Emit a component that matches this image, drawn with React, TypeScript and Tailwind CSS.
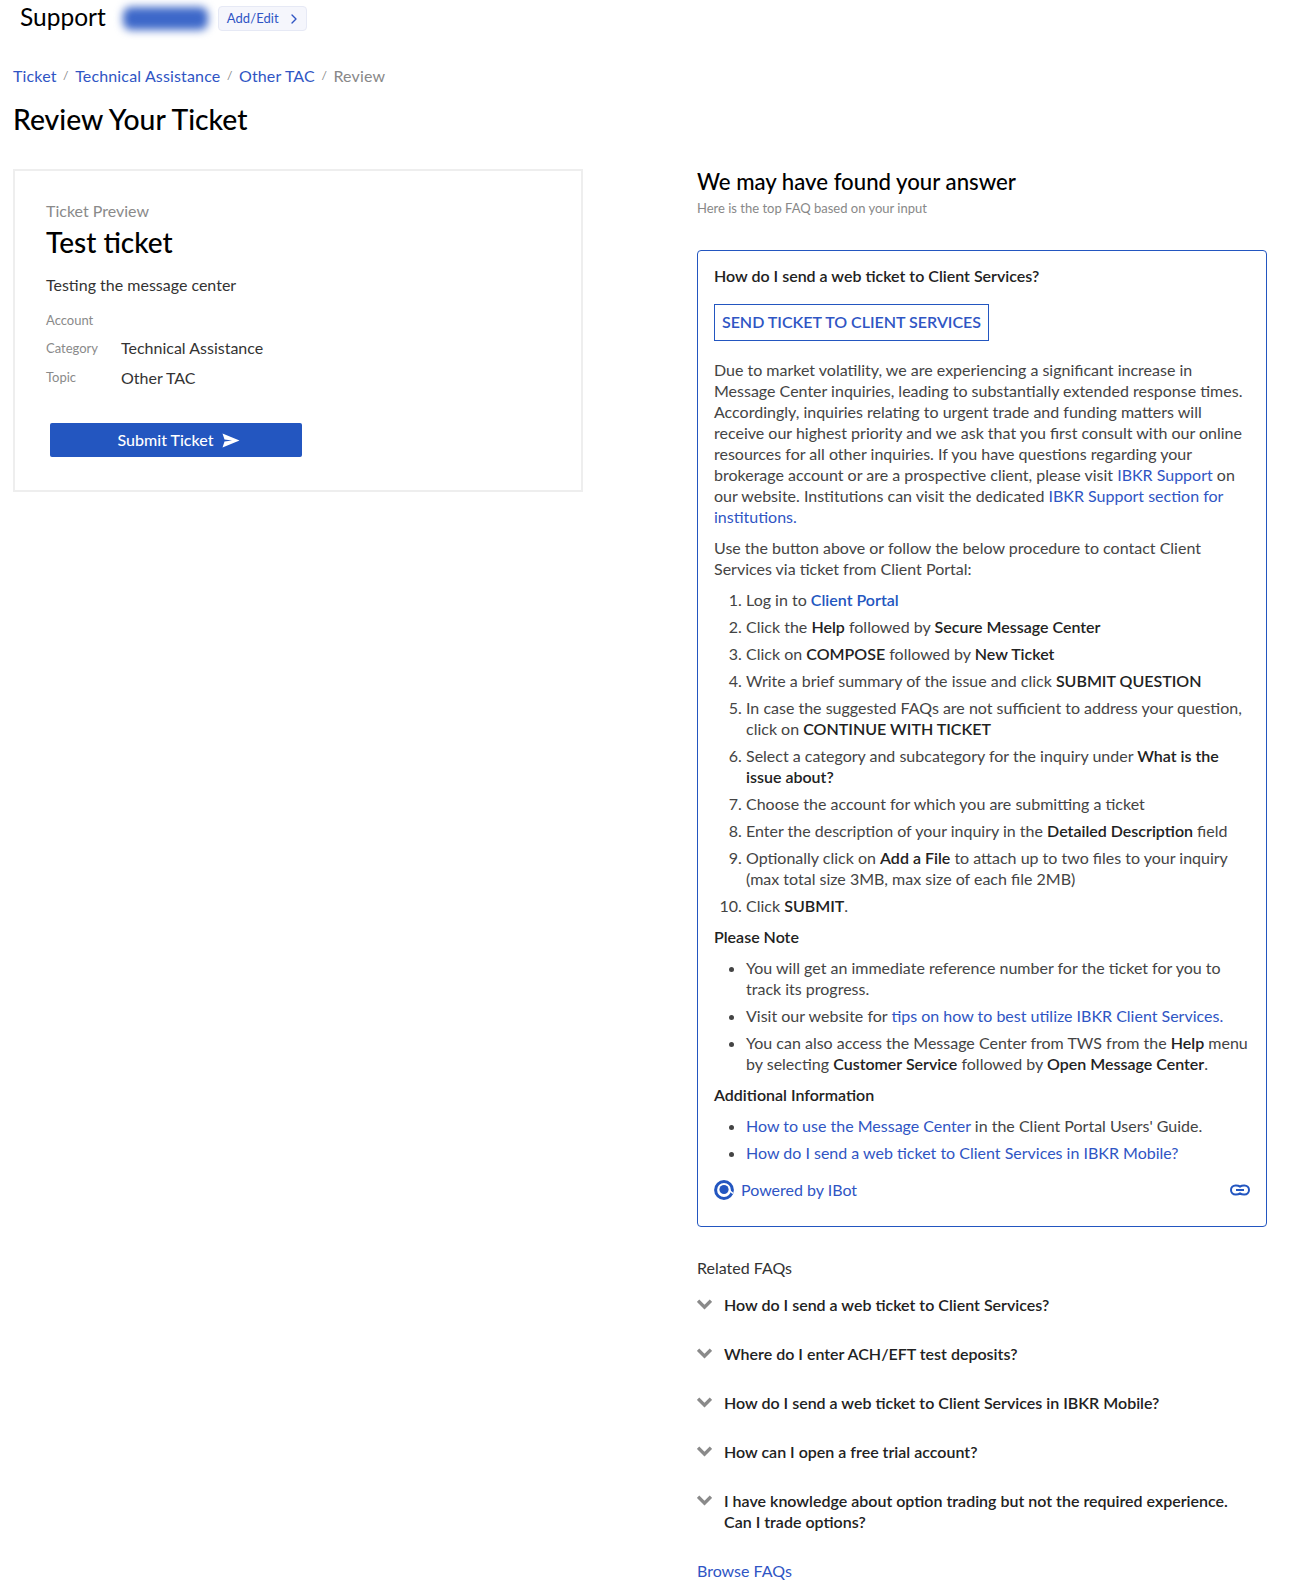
import { ChevronRight } from 'lucide-react'

const LINK = 'text-[#2f55c4]'
const STRONG = 'font-semibold text-[#222]'

const steps: React.ReactNode[] = [
  <>Log in to <a className="text-[#2356c0] font-semibold">Client Portal</a></>,
  <>Click the <b className={STRONG}>Help</b> followed by <b className={STRONG}>Secure Message Center</b></>,
  <>Click on <b className={STRONG}>COMPOSE</b> followed by <b className={STRONG}>New Ticket</b></>,
  <>Write a brief summary of the issue and click <b className={STRONG}>SUBMIT QUESTION</b></>,
  <>In case the suggested FAQs are not sufficient to address your question, click on <b className={STRONG}>CONTINUE WITH TICKET</b></>,
  <>Select a category and subcategory for the inquiry under <b className={STRONG}>What is the issue about?</b></>,
  <>Choose the account for which you are submitting a ticket</>,
  <>Enter the description of your inquiry in the <b className={STRONG}>Detailed Description</b> field</>,
  <>Optionally click on <b className={STRONG}>Add a File</b> to attach up to two files to your inquiry (max total size 3MB, max size of each file 2MB)</>,
  <>Click <b className={STRONG}>SUBMIT</b>.</>,
]

const related = [
  'How do I send a web ticket to Client Services?',
  'Where do I enter ACH/EFT test deposits?',
  'How do I send a web ticket to Client Services in IBKR Mobile?',
  'How can I open a free trial account?',
  'I have knowledge about option trading but not the required experience. Can I trade options?',
]

function Chevron() {
  return (
    <svg viewBox="0 0 14 10" className="w-[15px] h-[11px] mt-[5px] shrink-0" fill="none" stroke="#8a8a8a" strokeWidth="3.2">
      <path d="M1 1.5 L7 7.5 L13 1.5" />
    </svg>
  )
}

function TicketCard() {
  return (
    <div className="border-2 border-[#eeeeee] px-[31px] pt-[29px] h-[323px]">
      <div className="text-[16px] leading-[21px] text-[#8a8a8a]">Ticket Preview</div>
      <div className="text-[28px] leading-[36px] font-medium text-black mt-[3px]">Test ticket</div>
      <div className="text-[16px] leading-[21px] text-[#333] mt-[14px]">Testing the message center</div>
      <div className="text-[13px] leading-[20px] text-[#8a8a8a] mt-[15px]">Account</div>
      <div className="flex items-center mt-[8px] h-[20px]">
        <span className="w-[75px] text-[13px] text-[#8a8a8a] mt-[1px]">Category</span>
        <span className="text-[16px] text-[#333]">Technical Assistance</span>
      </div>
      <div className="flex items-center mt-[10px] h-[20px]">
        <span className="w-[75px] text-[13px] text-[#8a8a8a]">Topic</span>
        <span className="text-[16px] text-[#333]">Other TAC</span>
      </div>
      <button className="ml-[4px] mt-[35px] pl-[6px] w-[252px] h-[34px] bg-[#2356c0] rounded-[2px] text-white text-[16px] font-medium flex items-center justify-center gap-[9px]">
        Submit Ticket
        <svg viewBox="0 0 18 15" className="w-[18px] h-[15px]" fill="white">
          <path d="M0.5 0.5 L17.5 7.5 L0.5 14.5 L2.5 8.6 L10 7.5 L2.5 6.4 Z" />
        </svg>
      </button>
    </div>
  )
}

function AnswerBox() {
  return (
    <div className="mt-[32px] border border-[#2356c0] rounded-[4px] px-[16px] pt-[14px] h-[977px] text-[16px] leading-[21px] text-[#444]">
      <div className={STRONG}>How do I send a web ticket to Client Services?</div>
      <button className={`mt-[18px] pb-[2px] h-[37px] w-[275px] border border-[#2356c0] text-[16px] font-semibold ${LINK}`}>
        SEND TICKET TO CLIENT SERVICES
      </button>
      <p className="mt-[18px]">
        Due to market volatility, we are experiencing a significant increase in Message Center inquiries, leading to substantially extended response times. Accordingly, inquiries relating to urgent trade and funding matters will receive our highest priority and we ask that you first consult with our online resources for all other inquiries. If you have questions regarding your brokerage account or are a prospective client, please visit <a className={LINK}>IBKR Support</a> on our website. Institutions can visit the dedicated <a className={LINK}>IBKR Support section for institutions.</a>
      </p>
      <p className="mt-[10px]">
        Use the button above or follow the below procedure to contact Client Services via ticket from Client Portal:
      </p>
      <ol className="mt-[10px] pl-[32px] list-decimal flex flex-col gap-[6px]">
        {steps.map((s, i) => <li key={i}>{s}</li>)}
      </ol>
      <div className={`mt-[10px] ${STRONG}`}>Please Note</div>
      <ul className="mt-[10px] pl-[32px] list-disc flex flex-col gap-[6px]">
        <li>You will get an immediate reference number for the ticket for you to track its progress.</li>
        <li>Visit our website for <a className={LINK}>tips on how to best utilize IBKR Client Services.</a></li>
        <li>You can also access the Message Center from TWS from the <b className={STRONG}>Help</b> menu by selecting <b className={STRONG}>Customer Service</b> followed by <b className={STRONG}>Open Message Center</b>.</li>
      </ul>
      <div className={`mt-[10px] ${STRONG}`}>Additional Information</div>
      <ul className="mt-[10px] pl-[32px] list-disc flex flex-col gap-[6px]">
        <li><a className={LINK}>How to use the Message Center</a> in the Client Portal Users' Guide.</li>
        <li><a className={LINK}>How do I send a web ticket to Client Services in IBKR Mobile?</a></li>
      </ul>
      <div className="mt-[16px] flex items-center justify-between">
        <div className={`flex items-center gap-[7px] ${LINK}`}>
          <svg viewBox="0 0 20 20" className="w-[20px] h-[20px]">
            <circle cx="10" cy="10" r="8.4" fill="none" stroke="#2356c0" strokeWidth="3" />
            <circle cx="10" cy="9.5" r="4.6" fill="#2356c0" />
            <path d="M15.5 10.5 L19 13.5" stroke="white" strokeWidth="1.6" />
          </svg>
          Powered by IBot
        </div>
        <svg viewBox="0 0 20 12" className="w-[20px] h-[12px]" fill="none" stroke="#2356c0" strokeWidth="2">
          <path d="M10 2.6 Q8.5 1.5 6 1.5 H5.5 A4.5 4.5 0 0 0 5.5 10.5 H6 Q8.5 10.5 10 9.4 Q11.5 10.5 14 10.5 H14.5 A4.5 4.5 0 0 0 14.5 1.5 H14 Q11.5 1.5 10 2.6 Z" />
          <path d="M6 6 H14" />
        </svg>
      </div>
    </div>
  )
}

export default function App() {
  return (
    <div className="w-[1300px] h-[1588px] bg-white px-[13px] font-['Lato','Liberation_Sans',sans-serif] overflow-hidden">
      <div className="flex items-center h-[37px]">
        <span className="ml-[7px] -mt-[2px] text-[24.5px] text-black font-normal">Support</span>
        <div className="ml-[17px] w-[85px] h-[23px] rounded-[8px] bg-[#3d68c9] blur-[4px]" />
        <button className="ml-[10px] pl-[4px] h-[25px] w-[89px] rounded-[4px] border border-[#e6e9f5] bg-[#f5f6fc] text-[13px] tracking-[0.1px] text-[#2f55c4] flex items-center justify-center gap-[7px]">
          Add/Edit
          <ChevronRight size={16} strokeWidth={2} />
        </button>
      </div>
      <nav className="mt-[28px] h-[21px] flex items-center text-[16px] tracking-[0.15px] gap-[6.5px]">
        <a className={LINK}>Ticket</a>
        <span className="text-[#888] text-[12px] mt-[1px]">/</span>
        <a className={LINK}>Technical Assistance</a>
        <span className="text-[#888] text-[12px] mt-[1px]">/</span>
        <a className={LINK}>Other TAC</a>
        <span className="text-[#888] text-[12px] mt-[1px]">/</span>
        <span className="text-[#888]">Review</span>
      </nav>
      <h1 className="mt-[15px] text-[28.3px] leading-[36px] font-medium text-black">Review Your Ticket</h1>
      <div className="mt-[32px] grid grid-cols-[570px_570px] gap-x-[114px] items-start">
        <TicketCard />
        <div>
          <h2 className="text-[22.2px] leading-[26px] font-medium text-black">We may have found your answer</h2>
          <p className="mt-[3px] text-[13px] leading-[20px] text-[#888]">Here is the top FAQ based on your input</p>
          <AnswerBox />
          <div className="mt-[30px] text-[16px] leading-[21px] text-[#333]">Related FAQs</div>
          <div className="mt-[16px] flex flex-col gap-[28px]">
            {related.map((q) => (
              <div key={q} className="flex gap-[12px] pr-[24px] text-[16px] leading-[21px] font-semibold text-[#222]">
                <Chevron />
                <span>{q}</span>
              </div>
            ))}
          </div>
          <a className={`block mt-[28px] text-[16px] leading-[21px] ${LINK}`}>Browse FAQs</a>
        </div>
      </div>
    </div>
  )
}
